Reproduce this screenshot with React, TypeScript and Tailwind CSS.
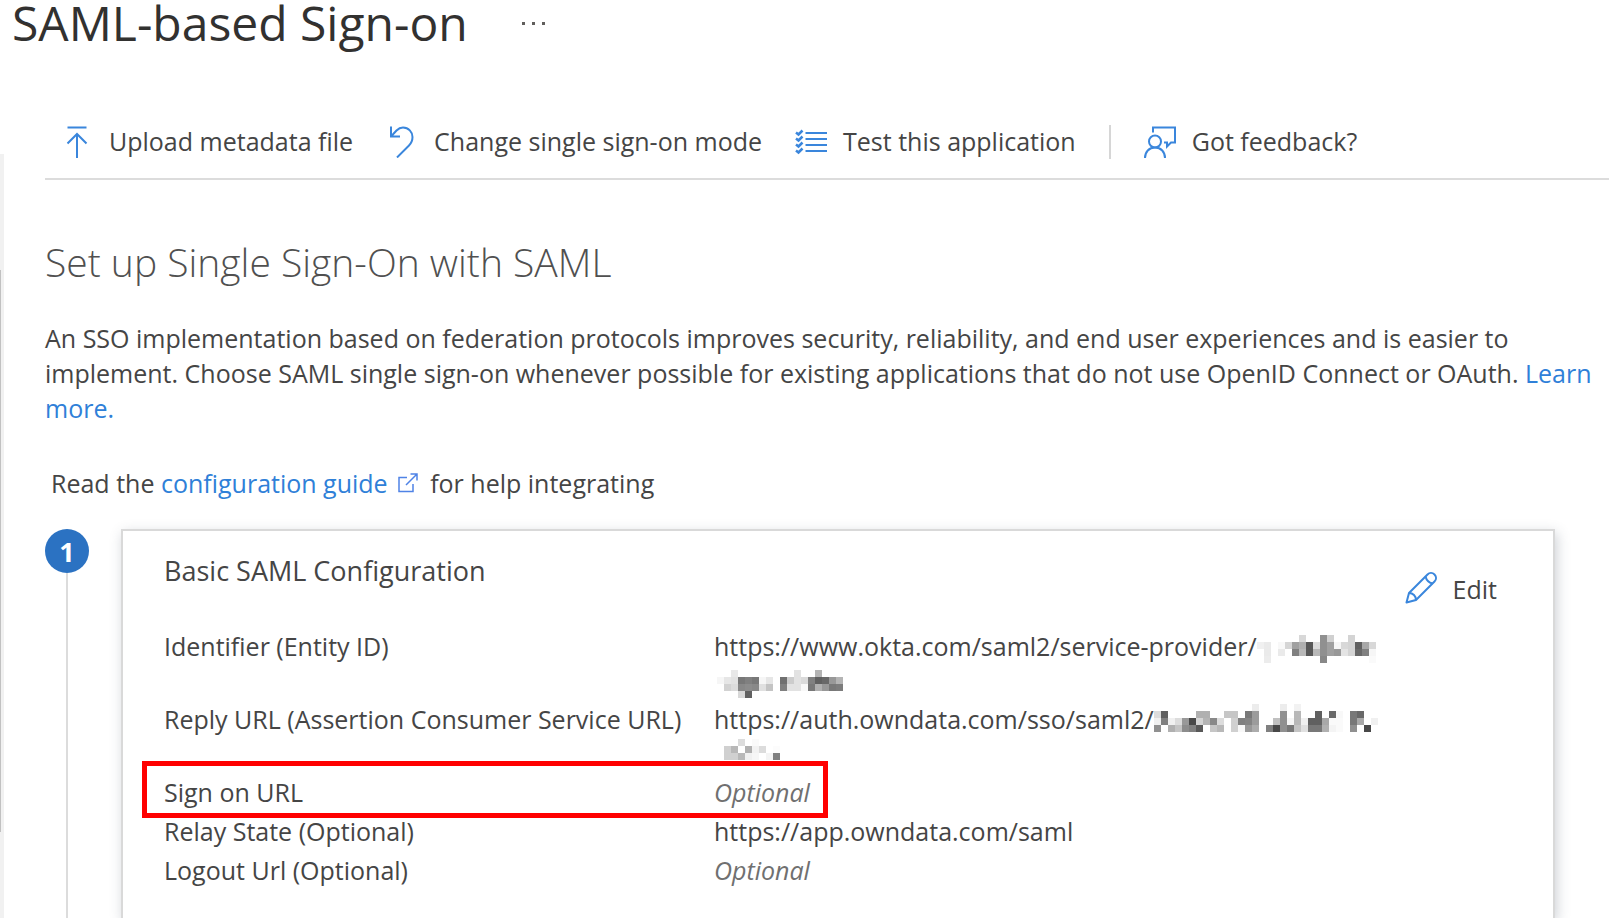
import React from "react";

const UploadIcon = () => (
  <svg className="h-8 w-8 shrink-0" viewBox="0 0 32 32" fill="none" stroke="#3a86dc" strokeWidth="2">
    <path d="M6.500 1.500h19M16 32V8M6.500 17.500L16 8l9.500 9.500" />
  </svg>
);

const UndoIcon = () => (
  <svg className="h-8 w-8 shrink-0" viewBox="0 0 32 32" fill="none" stroke="#3a86dc" strokeWidth="2">
    <path d="M5 .5V10.500h9M5 10.500L10.500 4.500C12.500 2.500 14.500 1.500 17 1.500c5.500 0 9.500 4.500 9.500 9.500 0 3.500-1 6-3.500 8.500L11 31.500" />
  </svg>
);

const ChecklistIcon = () => (
  <svg className="h-8 w-8 shrink-0" viewBox="0 0 32 32" fill="none" stroke="#3a86dc" strokeWidth="2">
    {[0, 6, 12, 18].map((y) => (
      <g key={y} transform={`translate(0 ${y})`}>
        <path d="M1 6.500l2.500 2L7.500 4.500" strokeWidth="2.500" />
        <path d="M10.500 7h21.500" />
      </g>
    ))}
  </svg>
);

const FeedbackIcon = () => (
  <svg className="h-8 w-8 shrink-0" viewBox="0 0 32 32" fill="none" stroke="#3a86dc" strokeWidth="2">
    <circle cx="11" cy="15.500" r="6" />
    <path d="M1 32c0-6 4-10.500 10-10.500S21 26 21 32" />
    <path d="M9 6.500V1.500h22v15h-4L23 20.500v-4H20" />
  </svg>
);

const PencilIcon = () => (
  <svg className="h-8 w-8 shrink-0" viewBox="0 0 32 32" fill="none" stroke="#3a86dc" strokeWidth="2" strokeLinejoin="round">
    <path d="M1.500 30.500L4 21 22.500 2.500c2-2 5-2 7 0s2 5 0 7L11 28l-9.500 2.500z" />
    <path d="M4 21c4 0 7 3 7 7M20.500 4.500c1 4 3 6 7 7" />
  </svg>
);

const ExternalIcon = () => (
  <svg className="ml-2.5 mr-1.5 inline-block h-5 w-5 align-baseline" viewBox="0 0 20 20" fill="none" stroke="#4f83e6" strokeWidth="1.500">
    <path d="M9 4.500H1v14h14V11M12.500 1H19v6.500M19 1L8 12" />
  </svg>
);

// Redacted values: two hex digits of grey per block, ".." is empty
const ENTITY_TAIL = [
  "............d8....90d0....d4......",
  "f0ea..f8d5a0b058dc90a0f6d8d460a8d8",
  "..ea..ea..80b858b890a098e4d46880f6",
  "..ec..............88............fa",
];

const ENTITY_NEXT = [
  "....e8................e2....b4......",
  "f6e6e2788078f6e6..70cce2da80606898b4",
  "..d2dc888c88e0c4..80e2e2f878b098787c",
  "......d860..........................",
];

const REPLY_TAIL = [
  "............................ec......ec..f2......................",
  "dc60........b0b0....c6c6..789c......90..b8....60..68f8..7868....",
  "f080f0dc9848d4b488dc..d080849c....c090f6b8f06060a8fafa..78a8..f0",
  "90..b0c48c8058..c6b8..d0f898ac..80489078c4e07878b0f4fa..90..48..",
];

const REPLY_NEXT = [
  "....dc..fa......",
  "d0b8..b0f2dc..fc",
  "d0d0b8f0f6..f480",
];

const Redacted = ({ rows, className = "" }: { rows: string[]; className?: string }) => {
  const cols = rows[0].length / 2;
  return (
    <svg
      className={`shrink-0 ${className}`}
      width={cols * 7}
      height={rows.length * 7}
      shapeRendering="crispEdges"
      aria-hidden="true"
    >
      {rows.map((row, y) =>
        Array.from({ length: cols }, (_, x) => {
          const v = row.slice(x * 2, x * 2 + 2);
          return v === ".." ? null : (
            <rect key={`${x}-${y}`} x={x * 7} y={y * 7} width="7" height="7" fill={`#${v}${v}${v}`} />
          );
        }),
      )}
    </svg>
  );
};

const commands = [
  { label: "Upload metadata file", icon: <UploadIcon /> },
  { label: "Change single sign-on mode", icon: <UndoIcon /> },
  { label: "Test this application", icon: <ChecklistIcon /> },
];

const Optional = () => <span className="italic text-[#707070]">Optional</span>;

const App = () => {
  return (
    <div className="relative flex min-h-screen flex-col overflow-hidden bg-white font-['Open_Sans','Noto_Sans',sans-serif] text-[25px] leading-[35px] text-[#454545]">
      {/* Scrollbar of the side menu */}
      <div className="absolute bottom-0 left-0 top-[154px] w-1 bg-[#f1f1f1]">
        <div className="mt-[116px] h-[562px] w-px bg-[#c1c1c1]" />
      </div>

      <header className="flex items-center gap-[54px] pl-3">
        <h1 className="text-[48px] leading-[46px] text-[#323130]">SAML-based Sign-on</h1>
        <button aria-label="More" className="flex gap-[7px]">
          <span className="h-[3px] w-[3px] bg-[#605e5c]" />
          <span className="h-[3px] w-[3px] bg-[#605e5c]" />
          <span className="h-[3px] w-[3px] bg-[#605e5c]" />
        </button>
      </header>

      <div className="ml-[45px] mt-[78px] flex items-center gap-[33px] border-b-2 border-[#dcdcdc] pb-[19px] pl-4">
        {commands.map((command) => (
          <button key={command.label} className="flex items-center gap-4 whitespace-nowrap">
            {command.icon}
            {command.label}
          </button>
        ))}
        <div className="h-[34px] w-[2px] bg-[#d6d6d6]" />
        <button className="flex items-center gap-4 whitespace-nowrap">
          <FeedbackIcon />
          Got feedback?
        </button>
      </div>

      <main className="flex flex-1 flex-col pl-[45px]">
        <h2 className="mt-14 text-[39px] font-light leading-[52px] text-[#505050]">
          Set up Single Sign-On with SAML
        </h2>
        <p className="mt-[33px] pr-3">
          An SSO implementation based on federation protocols improves security, reliability, and end user
          experiences and is easier to implement. Choose SAML single sign-on whenever possible for existing
          applications that do not use OpenID Connect or OAuth.{" "}
          <a href="#learn" className="text-[#2f80d8]">
            Learn more.
          </a>
        </p>
        <p className="mt-10 pl-[6px]">
          Read the{" "}
          <a href="#guide" className="text-[#2f80d8]">
            configuration guide
            <ExternalIcon />
          </a>{" "}
          for help integrating
        </p>

        <section className="mt-7 flex flex-1 gap-8 pr-[54px]">
          <div className="flex w-11 shrink-0 flex-col items-center">
            <div className="flex h-11 w-11 items-center justify-center rounded-full bg-[#2b72c2] text-[27px] font-bold text-white">
              1
            </div>
            <div className="w-[2px] flex-1 bg-[#dcdcdc]" />
          </div>

          <div className="flex-1 border-2 border-b-0 border-[#d9d9d9] pl-[41px] pr-14 shadow-[2px_4px_12px_rgba(60,70,90,0.25)]">
            <div className="flex items-start justify-between pt-[22px]">
              <h3 className="text-[27px]">Basic SAML Configuration</h3>
              <button className="mt-[19px] flex items-start gap-4">
                <PencilIcon />
                Edit
              </button>
            </div>

            <dl className="mt-[22px] grid grid-cols-[550px_1fr] gap-y-1">
              <dt>Identifier (Entity ID)</dt>
              <dd>
                <div className="flex">
                  https://www.okta.com/saml2/service-provider/
                  <Redacted rows={ENTITY_TAIL} className="mt-[6px]" />
                </div>
                <div className="h-[34px] pl-[3px] pt-[6px]">
                  <Redacted rows={ENTITY_NEXT} />
                </div>
              </dd>
              <dt>Reply URL (Assertion Consumer Service URL)</dt>
              <dd>
                <div className="flex">
                  https://auth.owndata.com/sso/saml2/
                  <Redacted rows={REPLY_TAIL} className="mt-[2px]" />
                </div>
                <div className="h-[34px] pl-[10px] pt-[2px]">
                  <Redacted rows={REPLY_NEXT} />
                </div>
              </dd>
              <dt className="relative">
                Sign on URL
                <span className="pointer-events-none absolute -bottom-2 -left-[22px] -top-[14px] w-[686px] border-[5px] border-[#ff0000]" />
              </dt>
              <dd>
                <Optional />
              </dd>
              <dt>Relay State (Optional)</dt>
              <dd>https://app.owndata.com/saml</dd>
              <dt>Logout Url (Optional)</dt>
              <dd>
                <Optional />
              </dd>
            </dl>
          </div>
        </section>
      </main>
    </div>
  );
};

export default App;
